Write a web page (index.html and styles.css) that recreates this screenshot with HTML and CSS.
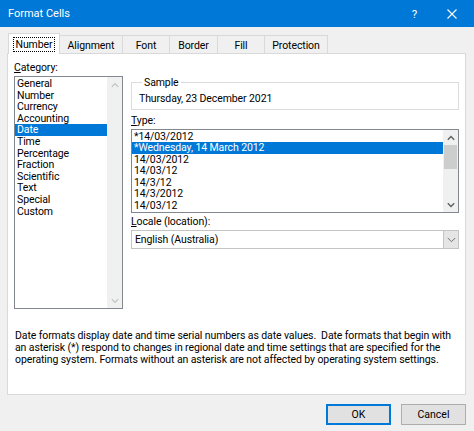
FILE: index.html
```html
<!DOCTYPE html>
<html>
<head>
<meta charset="utf-8">
<link rel="stylesheet" href="styles.css">
</head>
<body>
<div class="window">
  <div class="titlebar">
    <span class="title">Format Cells</span>
    <span class="tb-help">?</span>
    <svg class="tb-close" width="10" height="10" viewBox="0 0 10 10"><path d="M0.5 0.5 L9.5 9.5 M9.5 0.5 L0.5 9.5" stroke="#fff" stroke-width="1.1" fill="none"/></svg>
  </div>
  <div class="content">
    <div class="tabs">
      <div class="tab active w-number"><span class="focus">Number</span></div>
      <div class="tab w-align">Alignment</div>
      <div class="tab w-font">Font</div>
      <div class="tab w-border">Border</div>
      <div class="tab w-fill">Fill</div>
      <div class="tab w-prot">Protection</div>
    </div>
    <div class="panel">
      <div class="cols">
        <div class="col-left">
          <div class="label"><u>C</u>ategory:</div>
          <div class="listbox cat">
            <div class="items">
              <div class="item">General</div>
              <div class="item">Number</div>
              <div class="item">Currency</div>
              <div class="item">Accounting</div>
              <div class="item sel">Date</div>
              <div class="item">Time</div>
              <div class="item">Percentage</div>
              <div class="item">Fraction</div>
              <div class="item">Scientific</div>
              <div class="item">Text</div>
              <div class="item">Special</div>
              <div class="item">Custom</div>
            </div>
            <div class="scrollbar disabled">
              <svg class="arrow" width="8" height="6" viewBox="0 0 8 6"><polyline points="0.8,4.8 4,1.6 7.2,4.8" fill="none" stroke="currentColor" stroke-width="1.2"/></svg>
              <div class="track"></div>
              <svg class="arrow" width="8" height="6" viewBox="0 0 8 6"><polyline points="0.8,1.2 4,4.4 7.2,1.2" fill="none" stroke="currentColor" stroke-width="1.2"/></svg>
            </div>
          </div>
        </div>
        <div class="col-right">
          <fieldset class="sample">
            <legend>Sample</legend>
            <div class="sample-text">Thursday, 23 December 2021</div>
          </fieldset>
          <div class="label type-label"><u>T</u>ype:</div>
          <div class="listbox type">
            <div class="items">
              <div class="item">*14/03/2012</div>
              <div class="item sel">*Wednesday, 14 March 2012</div>
              <div class="item">14/03/2012</div>
              <div class="item">14/03/12</div>
              <div class="item">14/3/12</div>
              <div class="item">14/3/2012</div>
              <div class="item">14/03/12</div>
            </div>
            <div class="scrollbar">
              <svg class="arrow" width="8" height="6" viewBox="0 0 8 6"><polyline points="0.8,4.8 4,1.6 7.2,4.8" fill="none" stroke="currentColor" stroke-width="1.4"/></svg>
              <div class="track"><div class="thumb"></div></div>
              <svg class="arrow" width="8" height="6" viewBox="0 0 8 6"><polyline points="0.8,1.2 4,4.4 7.2,1.2" fill="none" stroke="currentColor" stroke-width="1.4"/></svg>
            </div>
          </div>
          <div class="label locale-label"><u>L</u>ocale (location):</div>
          <div class="combo">
            <span class="combo-text">English (Australia)</span>
            <span class="combo-btn">
              <svg width="9" height="6" viewBox="0 0 9 6"><polyline points="0.8,1 4.5,4.7 8.2,1" fill="none" stroke="#707070" stroke-width="1"/></svg>
            </span>
          </div>
        </div>
      </div>
      <p class="desc">Date formats display date and time serial numbers as date values.&nbsp; Date formats that begin with<br>an asterisk (*) respond to changes in regional date and time settings that are specified for the<br>operating system. Formats without an asterisk are not affected by operating system settings.</p>
    </div>
    <div class="footer">
      <button class="btn default">OK</button>
      <button class="btn">Cancel</button>
    </div>
  </div>
</div>
</body>
</html>
```
FILE: styles.css
```css
* { box-sizing: border-box; }
html, body { margin: 0; padding: 0; }
body {
  width: 474px;
  height: 431px;
  overflow: hidden;
  font-family: Roboto, "Noto Sans", sans-serif;
  font-size: 10.5px;
  letter-spacing: -0.1px;
  color: #000;
}
.window {
  width: 474px;
  height: 431px;
  background: #f0f0f0;
}
.titlebar {
  height: 27px;
  background: #0078d7;
  color: #fff;
  display: flex;
  align-items: center;
  padding-left: 8px;
}
.title { font-size: 11px; flex: 1; letter-spacing: 0; }
.tb-help { font-size: 11.5px; margin-right: 30px; }
.tb-close { margin-right: 17px; }

.content {
  padding: 6px 8px 0 7px;
}
.tabs {
  display: flex;
  height: 20px;
  margin-left: 1px;
  align-items: flex-end;
}
.tab {
  height: 18px;
  border: 1px solid #d9d9d9;
  border-left: none;
  border-bottom: none;
  background: #f0f0f0;
  display: flex;
  align-items: center;
  justify-content: center;
  line-height: 13px;
  padding-top: 1px;
  color: #000;
}
.tab.active {
  background: #fff;
  border-left: 1px solid #d9d9d9;
  position: relative;
  z-index: 1;
  margin-bottom: -1px;
  height: 21px;
  padding-top: 1px;
  padding-bottom: 1px;
}
.focus {
  border: 1px dotted #000;
  padding: 0 2px;
  line-height: 13px;
}
.w-number { width: 52px; }
.w-align { width: 63px; }
.w-font { width: 47px; }
.w-border { width: 48px; }
.w-fill { width: 47px; }
.w-prot { width: 63px; }

.panel {
  width: 459px;
  height: 342px;
  background: #fff;
  border: 1px solid #d9d9d9;
  padding: 7px 6px 0 6px;
}
.cols {
  display: flex;
  gap: 8px;
}
.col-left { width: 109px; }
.col-right { width: 328px; padding-top: 15px; }
.label { line-height: 13px; height: 13px; }
.label u { text-decoration: underline; text-underline-offset: 1px; }

.listbox {
  border: 1px solid #828790;
  background: #fff;
  display: flex;
  margin-top: 2px;
}
.listbox.cat { height: 233px; }
.listbox.type { height: 84px; }
.items { flex: 1; }
.cat .items { padding-top: 1px; }
.type .items { padding-top: 0.5px; }
.item {
  height: 11.6px;
  line-height: 11.6px;
  padding-left: 2px;
  white-space: nowrap;
}
.item.sel { background: #0078d7; color: #fff; }
.scrollbar {
  width: 15px;
  background: #f0f0f0;
  display: flex;
  flex-direction: column;
  align-items: center;
  color: #606060;
}
.scrollbar.disabled { color: #c0c0c0; }
.scrollbar .arrow { margin: 5px 0 4px; flex: none; }
.scrollbar .track { flex: 1; width: 100%; }
.thumb { height: 24px; background: #cdcdcd; margin: 0 1px; }

.sample {
  margin: 0;
  padding: 3px 7px 3px 7px;
  border: 1px solid #dcdcdc;
  height: 34px;
}
.sample legend {
  padding: 0 2px;
  margin-left: 3px;
  line-height: 13px;
}
.sample-text { line-height: 13px; }
.type-label { margin-top: 4px; }
.locale-label { margin-top: 2px; }

.combo {
  margin-top: 2px;
  height: 19px;
  border: 1px solid #c4c4c4;
  display: flex;
  align-items: center;
  background: #fff;
}
.combo-text { flex: 1; padding-left: 3px; }
.combo-btn {
  width: 15px;
  height: 17px;
  background: #e5e5e5;
  border-left: 1px solid #c4c4c4;
  display: flex;
  align-items: center;
  justify-content: center;
}

.desc {
  margin: 21px 0 0 1px;
  line-height: 12px;
  white-space: nowrap;
}

.footer {
  display: flex;
  justify-content: flex-end;
  gap: 10px;
  margin-top: 9px;
}
.btn {
  width: 65px;
  height: 21px;
  background: #e1e1e1;
  border: 1px solid #adadad;
  font-family: Roboto, "Noto Sans", sans-serif;
  font-size: 10.5px;
  color: #000;
  padding: 0;
  line-height: 17px;
}
.btn.default {
  border-color: #0078d7;
  box-shadow: inset 0 0 0 1px #0078d7;
}
```
